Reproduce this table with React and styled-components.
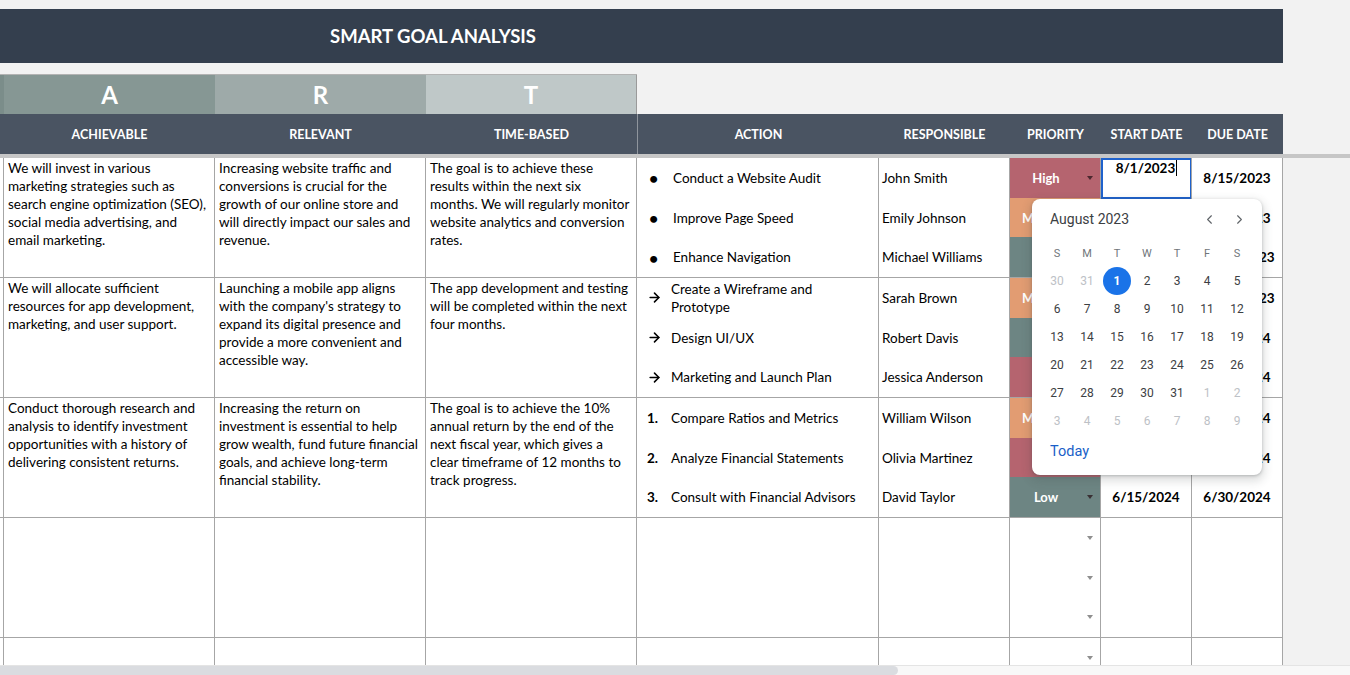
import React from "react";
import styled, { createGlobalStyle } from "styled-components";
import { ChevronLeft, ChevronRight, ArrowRight } from "lucide-react";

const COLS = "4px 211px 211px 211px 242px 131px 91px 91px 91px";
const LINE = "#a6a6a6";

const PRIORITY_COLORS = {
    High: "#b5646f",
    Medium: "#e29c72",
    Low: "#6d8583",
};

const goals = [
    {
        achievable: "We will invest in various\nmarketing strategies such as\nsearch engine optimization (SEO),\nsocial media advertising, and\nemail marketing.",
        relevant: "Increasing website traffic and\nconversions is crucial for the\ngrowth of our online store and\nwill directly impact our sales and\nrevenue.",
        timeBased: "The goal is to achieve these\nresults within the next six\nmonths. We will regularly monitor\nwebsite analytics and conversion\nrates.",
        marker: "bullet",
        actions: ["Conduct a Website Audit", "Improve Page Speed", "Enhance Navigation"],
        people: ["John Smith", "Emily Johnson", "Michael Williams"],
        priority: ["High", "Medium", "Low"],
        start: ["8/1/2023", "8/16/2023", "9/1/2023"],
        due: ["8/15/2023", "8/31/2023", "10/31/2023"],
    },
    {
        achievable: "We will allocate sufficient\nresources for app development,\nmarketing, and user support.",
        relevant: "Launching a mobile app aligns\nwith the company's strategy to\nexpand its digital presence and\nprovide a more convenient and\naccessible way.",
        timeBased: "The app development and testing\nwill be completed within the next\nfour months.",
        marker: "arrow",
        actions: ["Create a Wireframe and\nPrototype", "Design UI/UX", "Marketing and Launch Plan"],
        people: ["Sarah Brown", "Robert Davis", "Jessica Anderson"],
        priority: ["Medium", "Low", "High"],
        start: ["11/1/2023", "12/1/2023", "2/1/2024"],
        due: ["11/30/2023", "1/31/2024", "2/29/2024"],
    },
    {
        achievable: "Conduct thorough research and\nanalysis to identify investment\nopportunities with a history of\ndelivering consistent returns.",
        relevant: "Increasing the return on\ninvestment is essential to help\ngrow wealth, fund future financial\ngoals, and achieve long-term\nfinancial stability.",
        timeBased: "The goal is to achieve the 10%\nannual return by the end of the\nnext fiscal year, which gives a\nclear timeframe of 12 months to\ntrack progress.",
        marker: "number",
        actions: ["Compare Ratios and Metrics", "Analyze Financial Statements", "Consult with Financial Advisors"],
        people: ["William Wilson", "Olivia Martinez", "David Taylor"],
        priority: ["Medium", "High", "Low"],
        start: ["3/1/2024", "4/1/2024", "6/15/2024"],
        due: ["3/31/2024", "5/31/2024", "6/30/2024"],
    },
]

const emptyGoal = {
    achievable: "", relevant: "", timeBased: "", marker: "none",
    actions: ["", "", ""], people: ["", "", ""], priority: ["", "", ""],
    start: ["", "", ""], due: ["", "", ""],
}

const headers = ["", "ACHIEVABLE", "RELEVANT", "TIME-BASED", "ACTION", "RESPONSIBLE", "PRIORITY", "START DATE", "DUE DATE"]

// August 2023 starts on a Tuesday
const calendarDays = [
    ...[30, 31].map((d) => ({ d, muted: true })),
    ...Array.from({ length: 31 }, (_, i) => ({ d: i + 1, muted: false })),
    ...Array.from({ length: 9 }, (_, i) => ({ d: i + 1, muted: true })),
]

const markerFor = (type, index) => {
    if (type === "bullet") return "•"
    if (type === "arrow") return <ArrowRight size={15} strokeWidth={2.5} />
    if (type === "number") return `${index + 1}.`
    return ""
}

const App = () => {
    const rows = [...goals, emptyGoal, emptyGoal]

    return (
        <Page>
            <GlobalStyle />
            <TitleBar>
                <Title>SMART GOAL ANALYSIS</Title>
            </TitleBar>

            <LetterRow>
                <LetterCell $bg="#7b8d8a" />
                <LetterCell $bg="#869794">A</LetterCell>
                <LetterCell $bg="#9eaaa9">R</LetterCell>
                <LetterCell $bg="#bfc8c8" $edge>T</LetterCell>
            </LetterRow>

            <HeaderRow>
                {headers.map((label, i) => (
                    <HeaderCell key={i} $divider={label === "ACTION"}>{label}</HeaderCell>
                ))}
            </HeaderRow>
            <FreezeLine />

            <SheetBody>
                {rows.map((goal, gi) => (
                    <Group key={gi}>
                        <Cell />
                        <TextCell>{goal.achievable}</TextCell>
                        <TextCell>{goal.relevant}</TextCell>
                        <TextCell>{goal.timeBased}</TextCell>

                        <StackCell>
                            {goal.actions.map((action, i) => (
                                <ActionItem key={i}>
                                    <Marker $type={goal.marker}>{markerFor(goal.marker, i)}</Marker>
                                    <ActionText>{action}</ActionText>
                                </ActionItem>
                            ))}
                        </StackCell>

                        <StackCell>
                            {goal.people.map((person, i) => (
                                <PersonItem key={i}>{person}</PersonItem>
                            ))}
                        </StackCell>

                        <StackCell>
                            {goal.priority.map((level, i) => (
                                <PriorityItem key={i} $bg={PRIORITY_COLORS[level]}>
                                    <PriorityLabel>{level}</PriorityLabel>
                                    <Caret $dark={!!level} />
                                </PriorityItem>
                            ))}
                        </StackCell>

                        <StackCell>
                            {goal.start.map((date, i) => {
                                const editing = gi === 0 && i === 0
                                return (
                                    <DateItem key={i} $editing={editing}>
                                        {date}
                                        {editing && <TextCursor />}
                                    </DateItem>
                                )
                            })}
                        </StackCell>

                        <StackCell>
                            {goal.due.map((date, i) => (
                                <DateItem key={i}>{date}</DateItem>
                            ))}
                        </StackCell>
                    </Group>
                ))}
            </SheetBody>

            <ScrollTrack>
                <ScrollThumb />
            </ScrollTrack>

            <DatePicker>
                <PickerHead>
                    <MonthLabel>August 2023</MonthLabel>
                    <NavButtons>
                        <ChevronLeft size={15} strokeWidth={1.8} />
                        <ChevronRight size={15} strokeWidth={1.8} />
                    </NavButtons>
                </PickerHead>
                <DayGrid>
                    {["S", "M", "T", "W", "T", "F", "S"].map((d, i) => (
                        <WeekDay key={i}>{d}</WeekDay>
                    ))}
                    {calendarDays.map((day, i) => (
                        <DayCell key={i} $muted={day.muted}>
                            {day.d === 1 && !day.muted
                                ? <Selected>1</Selected>
                                : day.d}
                        </DayCell>
                    ))}
                </DayGrid>
                <TodayLink>Today</TodayLink>
            </DatePicker>
        </Page>
    )
}

export default App

const GlobalStyle = createGlobalStyle`
    html, body {
        margin: 0;
        padding: 0;
        background: #f2f2f2;
    }
    body {
        font-family: Lato, "Liberation Sans", sans-serif;
        overflow: hidden;
    }
`

const Page = styled.div`
    position: relative;
    width: 1350px;
    height: 675px;
    overflow: hidden;
    display: flex;
    flex-direction: column;
    background: #f2f2f2;
    color: #000;
`

const TitleBar = styled.header`
    margin-top: 9px;
    width: 1283px;
    height: 54px;
    flex-shrink: 0;
    display: flex;
    align-items: center;
    background: #343f4e;
`

const Title = styled.h1`
    margin: 0;
    width: 866px;
    text-align: center;
    color: #fff;
    font-size: 18.5px;
    font-weight: 700;
`

const LetterRow = styled.div`
    margin-top: 11px;
    width: 637px;
    height: 40px;
    flex-shrink: 0;
    display: grid;
    grid-template-columns: 4px 211px 211px 211px;
    border-top: 1px solid #b3b3b3;
    box-sizing: border-box;
`

const LetterCell = styled.div`
    display: flex;
    align-items: center;
    justify-content: center;
    background: ${({ $bg }) => $bg};
    color: #fff;
    font-size: 24px;
    font-weight: 700;
    border-right: ${({ $edge }) => ($edge ? "1px solid #9a9a9a" : "none")};
`

const HeaderRow = styled.div`
    width: 1283px;
    height: 40px;
    flex-shrink: 0;
    display: grid;
    grid-template-columns: ${COLS};
    background: #4a5462;
`

const HeaderCell = styled.div`
    display: flex;
    align-items: center;
    justify-content: center;
    color: #fff;
    font-size: 12.5px;
    font-weight: 700;
    border-left: ${({ $divider }) => ($divider ? "1px solid #8f959d" : "none")};
`

const FreezeLine = styled.div`
    height: 4px;
    flex-shrink: 0;
    background: #c6c6c6;
`

const SheetBody = styled.div`
    flex: 1;
    overflow: hidden;
`

const Group = styled.div`
    width: 1283px;
    height: 120px;
    box-sizing: border-box;
    display: grid;
    grid-template-columns: ${COLS};
    background: #fff;
    border-bottom: 1px solid ${LINE};
`

const Cell = styled.div`
    border-right: 1px solid ${LINE};
    overflow: hidden;
`

const TextCell = styled(Cell)`
    padding: 1px 3px 0 4px;
    font-size: 13.5px;
    line-height: 18px;
    white-space: pre;
`

const StackCell = styled(Cell)`
    display: flex;
    flex-direction: column;
`

const ActionItem = styled.div`
    flex: 1;
    display: flex;
    align-items: center;
    padding-left: 10px;
    font-size: 13.5px;
`

const Marker = styled.span`
    width: 24px;
    flex-shrink: 0;
    display: flex;
    align-items: center;
    font-weight: 700;
    font-size: ${({ $type }) => ($type === "bullet" ? "16px" : "13.5px")};
    padding-left: ${({ $type }) => ($type === "bullet" ? "2px" : "0")};
`

const ActionText = styled.span`
    white-space: pre;
    line-height: 18px;
`

const PersonItem = styled.div`
    flex: 1;
    display: flex;
    align-items: center;
    padding-left: 3px;
    font-size: 13.5px;
    white-space: nowrap;
`

const PriorityItem = styled.div`
    flex: 1;
    display: flex;
    align-items: center;
    background: ${({ $bg }) => $bg || "transparent"};
    color: #fff;
    font-size: 13px;
    font-weight: 700;
`

const PriorityLabel = styled.span`
    width: 72px;
    text-align: center;
`

const Caret = styled.span`
    margin-left: 5px;
    width: 0;
    height: 0;
    border-left: 3.5px solid transparent;
    border-right: 3.5px solid transparent;
    border-top: 4px solid ${({ $dark }) => ($dark ? "rgba(40, 20, 25, 0.75)" : "#8f8f8f")};
`

const DateItem = styled.div`
    flex: 1;
    display: flex;
    justify-content: center;
    align-items: ${({ $editing }) => ($editing ? "flex-start" : "center")};
    padding-top: ${({ $editing }) => ($editing ? "2px" : "0")};
    font-size: 13.5px;
    font-weight: 700;
    box-shadow: ${({ $editing }) => ($editing ? "inset 0 0 0 2px #1f62cc" : "none")};
    margin: ${({ $editing }) => ($editing ? "0 -1px 0 0" : "0")};
`

const TextCursor = styled.span`
    display: inline-block;
    width: 1px;
    height: 16px;
    background: #000;
    margin-left: 1px;
`

const ScrollTrack = styled.div`
    height: 9px;
    flex-shrink: 0;
    background: #f8f8f8;
    border-top: 1px solid #e4e4e4;
`

const ScrollThumb = styled.div`
    width: 898px;
    height: 100%;
    background: #dadce0;
    border-radius: 0 5px 5px 0;
`

const DatePicker = styled.div`
    position: absolute;
    left: 1032px;
    top: 199px;
    width: 230px;
    height: 276px;
    box-sizing: border-box;
    padding: 0 10px 8px;
    background: #fff;
    border-radius: 8px;
    box-shadow: 0 1px 3px rgba(60, 64, 67, 0.3), 0 4px 8px 3px rgba(60, 64, 67, 0.15);
    font-family: Roboto, "Liberation Sans", sans-serif;
`

const PickerHead = styled.div`
    height: 40px;
    display: flex;
    align-items: center;
    justify-content: space-between;
    padding: 0 5px 0 8px;
`

const MonthLabel = styled.span`
    font-size: 14px;
    color: #3c4043;
`

const NavButtons = styled.div`
    display: flex;
    gap: 15px;
    color: #5f6368;
`

const DayGrid = styled.div`
    display: grid;
    grid-template-columns: repeat(7, 30px);
    grid-auto-rows: 28px;
`

const WeekDay = styled.div`
    display: flex;
    align-items: center;
    justify-content: center;
    font-size: 11px;
    color: #70757a;
`

const DayCell = styled.div`
    display: flex;
    align-items: center;
    justify-content: center;
    font-size: 12px;
    color: ${({ $muted }) => ($muted ? "#bdc1c6" : "#3c4043")};
`

const Selected = styled.span`
    width: 28px;
    height: 28px;
    border-radius: 50%;
    background: #1a73e8;
    color: #fff;
    font-weight: 700;
    display: flex;
    align-items: center;
    justify-content: center;
`

const TodayLink = styled.div`
    height: 32px;
    display: flex;
    align-items: center;
    padding-left: 8px;
    font-size: 14.5px;
    color: #1a5fc8;
`
